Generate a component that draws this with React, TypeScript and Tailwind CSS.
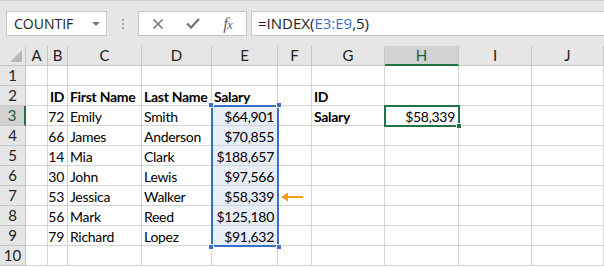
import React from "react";

const COLS = ["A", "B", "C", "D", "E", "F", "G", "H", "I", "J"];

type Cell = { v: string; bold?: boolean; right?: boolean };

// rows 1..10, keyed by column letter
const DATA: Record<number, Record<string, Cell>> = {
  2: {
    B: { v: "ID", bold: true },
    C: { v: "First Name", bold: true },
    D: { v: "Last Name", bold: true },
    E: { v: "Salary", bold: true },
    G: { v: "ID", bold: true },
  },
  3: { B: { v: "72", right: true }, C: { v: "Emily" }, D: { v: "Smith" }, E: { v: "$64,901", right: true }, G: { v: "Salary", bold: true }, H: { v: "$58,339", right: true } },
  4: { B: { v: "66", right: true }, C: { v: "James" }, D: { v: "Anderson" }, E: { v: "$70,855", right: true } },
  5: { B: { v: "14", right: true }, C: { v: "Mia" }, D: { v: "Clark" }, E: { v: "$188,657", right: true } },
  6: { B: { v: "30", right: true }, C: { v: "John" }, D: { v: "Lewis" }, E: { v: "$97,566", right: true } },
  7: { B: { v: "53", right: true }, C: { v: "Jessica" }, D: { v: "Walker" }, E: { v: "$58,339", right: true } },
  8: { B: { v: "56", right: true }, C: { v: "Mark" }, D: { v: "Reed" }, E: { v: "$125,180", right: true } },
  9: { B: { v: "79", right: true }, C: { v: "Richard" }, D: { v: "Lopez" }, E: { v: "$91,632", right: true } },
};

const cellFont = { fontFamily: "Lato, 'Liberation Sans', sans-serif" };
const uiFont = { fontFamily: "'Open Sans', 'Noto Sans', sans-serif" };

export default function App() {
  return (
    <div className="w-[604px] h-[267px] overflow-hidden bg-white text-black">
      {/* formula bar */}
      <div className="h-[46px] bg-[#e6e6e6] border-t border-[#d4d4d4] flex items-start pt-[10px] pl-[6px]" style={uiFont}>
        <div className="w-[101px] h-[25px] bg-white border border-[#c6c6c6] flex items-center justify-between pl-[7px] pr-[6px] text-[14px] text-[#222]">
          <span>COUNTIF</span>
          <span className="w-0 h-0 border-l-[4px] border-r-[4px] border-t-[4px] border-l-transparent border-r-transparent border-t-[#777]" />
        </div>
        <div className="w-[31px] h-[25px] flex flex-col items-center justify-center gap-[2px]">
          <span className="w-[2px] h-[2px] bg-[#aaa]" />
          <span className="w-[2px] h-[2px] bg-[#aaa]" />
          <span className="w-[2px] h-[2px] bg-[#aaa]" />
        </div>
        <div className="w-[109px] h-[25px] bg-white border border-[#c6c6c6] flex items-center">
          <div className="w-[37px] flex justify-center">
            <svg width="12" height="12" viewBox="0 0 12 12">
              <path d="M1.5 1.5 L10.5 10.5 M10.5 1.5 L1.5 10.5" stroke="#777" strokeWidth="1.6" />
            </svg>
          </div>
          <div className="w-[34px] flex justify-center">
            <svg width="14" height="11" viewBox="0 0 14 11">
              <path d="M1 5.5 L5 9.5 L13 1" stroke="#777" strokeWidth="2.4" fill="none" />
            </svg>
          </div>
          <div className="w-[36px] flex justify-center items-baseline leading-none text-[#666] italic" style={{ fontFamily: "'Liberation Serif', serif" }}>
            <span className="text-[17px]">f</span>
            <span className="text-[13px] -ml-[1px]">x</span>
          </div>
        </div>
        <div className="ml-[4px] flex-1 h-[25px] bg-white border border-[#c6c6c6] border-r-0 flex items-center pl-[6px] text-[15px] text-[#222]">
          <span>=INDEX(</span>
          <span className="text-[#3b6fc6]">E3:E9</span>
          <span>,5)</span>
        </div>
      </div>

      {/* grid */}
      <div className="relative" style={cellFont}>
        <div className="grid grid-cols-[26px_22px_20px_74px_70px_66px_34px_73px_74px_73px_72px] auto-rows-[20px]">
          {/* header row */}
          <div className="bg-[#e6e6e6] border-r border-b border-[#c6c6c6] flex items-end justify-end pr-[3px] pb-[3px]">
            <svg width="12" height="12" viewBox="0 0 12 12">
              <path d="M12 0 V12 H0 Z" fill="#b9b9b9" />
            </svg>
          </div>
          {COLS.map((c) => (
            <div
              key={c}
              className={
                "flex items-center justify-center text-[15px] border-r " +
                (c === "H"
                  ? "bg-[#d2d2d2] border-r-[#c6c6c6] border-b-2 border-b-[#217346] text-[#1e5d3a]"
                  : "bg-[#e6e6e6] border-[#c6c6c6] border-b border-b-[#c6c6c6] text-[#222]")
              }
            >
              {c}
            </div>
          ))}

          {Array.from({ length: 10 }, (_, i) => i + 1).map((r) => (
            <React.Fragment key={r}>
              <div
                className={
                  "flex items-center justify-center text-[15px] border-b border-[#c6c6c6] " +
                  (r === 3
                    ? "bg-[#d2d2d2] border-r-2 border-r-[#217346] text-[#1e5d3a]"
                    : "bg-[#e6e6e6] border-r border-r-[#c6c6c6] text-[#222]")
                }
              >
                {r}
              </div>
              {COLS.map((c) => {
                const cell = DATA[r]?.[c];
                const sel = c === "E" && r >= 3 && r <= 9;
                return (
                  <div
                    key={c}
                    className={
                      "border-r border-b border-[#d4d4d4] flex items-center pt-[1px] text-[14px] tracking-[-0.3px] whitespace-nowrap overflow-visible " +
                      (cell?.right ? "justify-end pr-[3px] " : "pl-[2px] ") +
                      (cell?.bold ? "font-bold " : "") +
                      (sel ? "bg-[#e8eef8]" : "")
                    }
                  >
                    {cell?.v}
                  </div>
                );
              })}
            </React.Fragment>
          ))}
        </div>

        {/* selection E3:E9 */}
        <div className="absolute left-[211px] top-[59px] w-[68px] h-[142px] border-2 border-[#3a6fc7] pointer-events-none">
          <span className="absolute -left-[5px] -top-[5px] w-[6px] h-[6px] bg-[#3a6fc7] border border-white" />
          <span className="absolute -right-[5px] -top-[5px] w-[6px] h-[6px] bg-[#3a6fc7] border border-white" />
          <span className="absolute -left-[5px] -bottom-[5px] w-[6px] h-[6px] bg-[#3a6fc7] border border-white" />
          <span className="absolute -right-[5px] -bottom-[5px] w-[6px] h-[6px] bg-[#3a6fc7] border border-white" />
        </div>

        {/* active cell H3 */}
        <div className="absolute left-[384px] top-[59px] w-[76px] h-[22px] border-2 border-[#217346] pointer-events-none">
          <span className="absolute -right-[4px] -bottom-[4px] w-[6px] h-[6px] bg-[#217346] border border-white" />
        </div>

        {/* arrow */}
        <svg className="absolute left-[281px] top-[146px]" width="22" height="10" viewBox="0 0 22 10">
          <path d="M22 5 H4" stroke="#f5a01a" strokeWidth="2" />
          <path d="M0 5 L7 0.5 L7 9.5 Z" fill="#f5a01a" />
        </svg>
      </div>
    </div>
  );
}
